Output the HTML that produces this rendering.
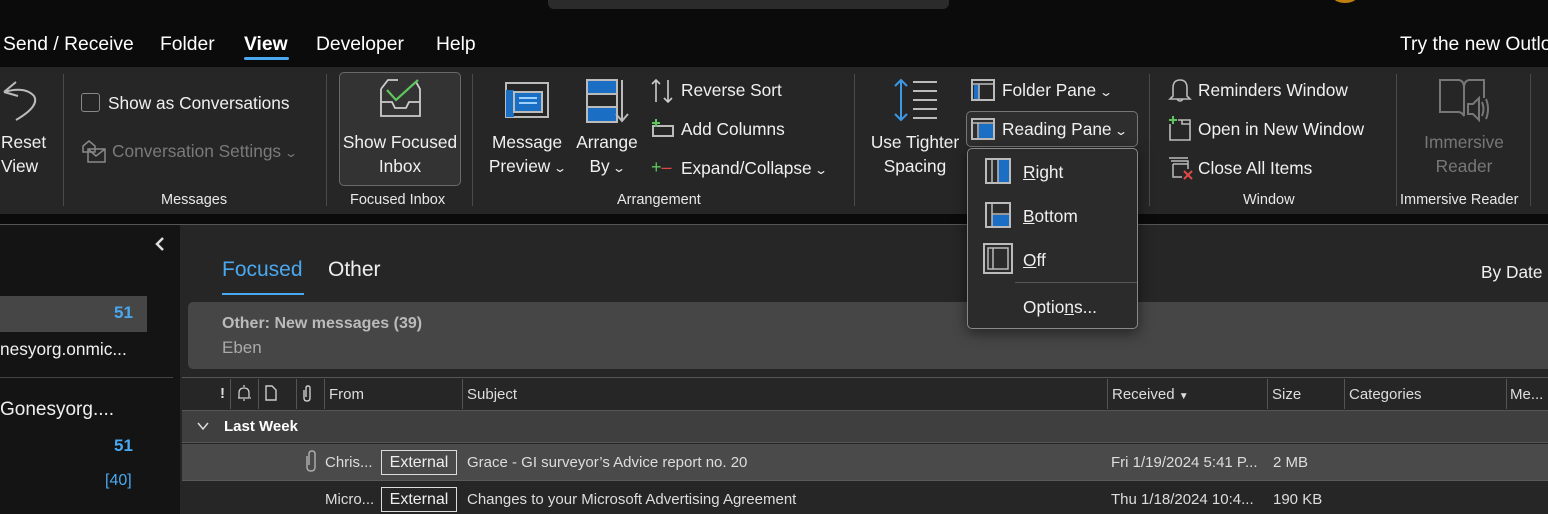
<!DOCTYPE html>
<html><head><meta charset="utf-8"><style>
*{margin:0;padding:0;box-sizing:border-box}
body{width:1548px;height:514px;overflow:hidden;background:#262626;font-family:"Liberation Sans",sans-serif;color:#fff;position:relative}
.a{position:absolute;white-space:nowrap}
.t{font-size:19.3px;color:#fff}
.r{font-size:17.3px;color:#f0f0f0}
.g{font-size:14.5px;color:#e8e8e8}
.sep{position:absolute;width:1px;background:#4a4a4a}
.s{font-size:15px;color:#ddd}
.chev{font-size:12px;display:inline-block;transform:scaleX(1.4)}
</style></head><body>
<div class="a" style="left:0;top:0;width:1548px;height:67px;background:#0b0b0b"></div>
<div class="a" style="left:548px;top:0;width:401px;height:9px;background:#2b2b2b;border-radius:0 0 6px 6px"></div>
<div class="a" style="left:1333px;top:-10px;width:24px;height:13px;background:#c08010;border-radius:50%"></div>
<div class="a t" style="left:3px;top:34px">Send / Receive</div>
<div class="a t" style="left:160px;top:34px">Folder</div>
<div class="a t" style="left:244px;top:34px;font-weight:bold">View</div>
<div class="a" style="left:244px;top:57px;width:45px;height:3px;background:#4aa8f0;border-radius:2px"></div>
<div class="a t" style="left:316px;top:34px">Developer</div>
<div class="a t" style="left:436px;top:34px">Help</div>
<div class="a t" style="left:1400px;top:34px">Try the new Outlo</div>

<div class="a" style="left:0;top:67px;width:1548px;height:147px;background:#262626"></div>
<svg class="a" style="left:0;top:78px" width="42" height="44"><path d="M4 14 L16 4 M4 14 L18 18 M4 14 Q25 8 34 18 Q40 28 16 42" fill="none" stroke="#bbb" stroke-width="2"/></svg>
<div class="a r" style="left:1px;top:130px;line-height:24px">Reset<br>View</div>
<div class="sep" style="left:63px;top:74px;height:132px"></div>
<div class="a" style="left:81px;top:93px;width:19px;height:19px;border:1.5px solid #888;border-radius:3px"></div>
<div class="a r" style="left:108px;top:93px">Show as Conversations</div>
<svg class="a" style="left:81px;top:138px" width="26" height="26"><path d="M2 8 L8 3 L14 8 V14 H2Z M7 11 H24 V24 H7Z M7 11 L15 18 L24 11" fill="none" stroke="#888" stroke-width="1.5"/></svg>
<div class="a r" style="left:112px;top:141px;color:#7a7a7a">Conversation Settings <span class="chev">&#8964;</span></div>
<div class="a g" style="left:161px;top:192px">Messages</div>
<div class="sep" style="left:326px;top:74px;height:132px"></div>
<div class="a" style="left:339px;top:72px;width:122px;height:114px;border:1px solid #6a6a6a;border-radius:5px;background:#333"></div>
<svg class="a" style="left:378px;top:78px" width="46" height="40"><path d="M3 11 L10 2 H20 M3 11 V38 H42 V11 L38 4 M3 24 H14 L17 30 H28 L31 24 H42" fill="none" stroke="#ccc" stroke-width="1.8"/><path d="M9 12 L18 22 L40 2" fill="none" stroke="#5fc55f" stroke-width="2.2"/></svg>
<div class="a r" style="left:342px;top:130px;line-height:24px;text-align:center;width:116px">Show Focused<br>Inbox</div>
<div class="a g" style="left:350px;top:192px">Focused Inbox</div>
<div class="sep" style="left:472px;top:74px;height:132px"></div>
<svg class="a" style="left:505px;top:82px" width="44" height="36"><rect x="1" y="1" width="42" height="34" fill="none" stroke="#bbb" stroke-width="2"/><rect x="1" y="8" width="8" height="27" fill="#1a6fc4"/><rect x="9" y="10" width="28" height="20" fill="#1a6fc4" stroke="#bbb" stroke-width="2"/><path d="M14 16 H32 M14 21 H32" stroke="#9cd0ff" stroke-width="2"/></svg>
<div class="a r" style="left:486px;top:130px;line-height:24px;text-align:center;width:82px">Message<br>Preview <span class="chev">&#8964;</span></div>
<svg class="a" style="left:585px;top:78px" width="48" height="48"><rect x="2" y="2" width="30" height="42" fill="none" stroke="#bbb" stroke-width="2"/><rect x="3" y="3" width="28" height="12" fill="#1a6fc4"/><rect x="3" y="29" width="28" height="14" fill="#1a6fc4"/><path d="M2 16 H32 M2 29 H32 M37 2 V42 M31 36 L37 43 L43 36" fill="none" stroke="#bbb" stroke-width="2"/></svg>
<div class="a r" style="left:570px;top:130px;line-height:24px;text-align:center;width:74px">Arrange<br>By <span class="chev">&#8964;</span></div>
<svg class="a" style="left:650px;top:78px" width="26" height="26"><path d="M6 2 V24 M2 6 L6 2 L10 6 M18 2 V24 M14 20 L18 24 L22 20" fill="none" stroke="#ccc" stroke-width="1.6"/></svg>
<div class="a r" style="left:681px;top:80px">Reverse Sort</div>
<svg class="a" style="left:650px;top:118px" width="26" height="22"><rect x="3" y="8" width="20" height="10" fill="none" stroke="#bbb" stroke-width="2"/><path d="M6 1 V9 M2 5 H10" stroke="#5fc55f" stroke-width="2"/></svg>
<div class="a r" style="left:681px;top:119px">Add Columns</div>
<div class="a" style="left:651px;top:157px;font-size:18px"><span style="color:#5fc55f">+</span><span style="color:#e04848">&#8211;</span></div>
<div class="a r" style="left:681px;top:158px">Expand/Collapse <span class="chev">&#8964;</span></div>
<div class="a g" style="left:617px;top:192px">Arrangement</div>
<div class="sep" style="left:854px;top:74px;height:132px"></div>
<svg class="a" style="left:891px;top:78px" width="48" height="46"><path d="M10 2 V24 M4 8 L10 2 L16 8 M10 24 V42 M4 36 L10 42 L16 36" fill="none" stroke="#3a9ae8" stroke-width="2"/><path d="M22 4 H46 M22 13 H46 M22 22 H46 M22 31 H46 M22 40 H46" stroke="#bbb" stroke-width="2"/></svg>
<div class="a r" style="left:868px;top:130px;line-height:24px;text-align:center;width:94px">Use Tighter<br>Spacing</div>
<svg class="a" style="left:971px;top:79px" width="24" height="22"><rect x="1" y="1" width="22" height="20" fill="none" stroke="#bbb" stroke-width="2"/><rect x="3" y="6" width="5" height="14" fill="#1a6fc4"/><path d="M1 5 H23 M8 5 V21" stroke="#bbb" stroke-width="1.5"/></svg>
<div class="a r" style="left:1002px;top:80px">Folder Pane <span class="chev">&#8964;</span></div>
<div class="a" style="left:966px;top:111px;width:172px;height:36px;border:1px solid #777;border-radius:5px;background:#2e2e2e"></div>
<svg class="a" style="left:971px;top:118px" width="24" height="22"><rect x="1" y="1" width="22" height="20" fill="none" stroke="#bbb" stroke-width="2"/><rect x="8" y="6" width="14" height="14" fill="#1a6fc4"/><path d="M1 5 H23 M7 5 V21" stroke="#bbb" stroke-width="1.5"/></svg>
<div class="a r" style="left:1002px;top:119px">Reading Pane <span class="chev">&#8964;</span></div>
<div class="sep" style="left:1149px;top:74px;height:132px"></div>
<svg class="a" style="left:1168px;top:78px" width="24" height="24"><path d="M5 18 V10 Q5 2 12 2 Q19 2 19 10 V18 L22 21 H2 Z M9 21 Q12 25 15 21" fill="none" stroke="#bbb" stroke-width="1.6"/></svg>
<div class="a r" style="left:1198px;top:80px">Reminders Window</div>
<svg class="a" style="left:1168px;top:116px" width="24" height="26"><path d="M2 8 V24 H22 V4 H10 M14 4 V8 H22" fill="none" stroke="#bbb" stroke-width="1.6"/><path d="M5 0 V8 M1 4 H9" stroke="#5fc55f" stroke-width="2"/></svg>
<div class="a r" style="left:1198px;top:119px">Open in New Window</div>
<svg class="a" style="left:1168px;top:157px" width="26" height="24"><path d="M1 1 H20 M3 4 H20 V12 M5 7 V20 H14 M5 7 H20" fill="none" stroke="#bbb" stroke-width="1.5"/><path d="M16 14 L24 22 M24 14 L16 22" stroke="#e04848" stroke-width="2"/></svg>
<div class="a r" style="left:1198px;top:158px">Close All Items</div>
<div class="a g" style="left:1243px;top:192px">Window</div>
<div class="sep" style="left:1396px;top:74px;height:132px"></div>
<svg class="a" style="left:1438px;top:78px" width="52" height="46"><path d="M2 2 H20 Q26 2 26 10 V38 Q24 34 20 34 H2 Z M26 10 Q26 2 32 2 H46 V20" fill="none" stroke="#777" stroke-width="2"/><path d="M30 26 H35 L41 20 V42 L35 36 H30 Z M44 24 Q47 31 44 38 M48 21 Q52 31 48 41" fill="none" stroke="#777" stroke-width="2"/></svg>
<div class="a r" style="left:1414px;top:130px;line-height:24px;text-align:center;width:100px;color:#777">Immersive<br>Reader</div>
<div class="a g" style="left:1400px;top:192px">Immersive Reader</div>
<div class="sep" style="left:1530px;top:74px;height:132px"></div>

<div class="a" style="left:0;top:214px;width:1548px;height:10px;background:#0b0b0b"></div>
<div class="a" style="left:0;top:224px;width:1548px;height:1px;background:#555"></div>
<div class="a" style="left:0;top:225px;width:180px;height:289px;background:#141414"></div>
<svg class="a" style="left:154px;top:236px" width="12" height="16"><path d="M9 2 L3 8 L9 14" fill="none" stroke="#ddd" stroke-width="2.5"/></svg>
<div class="a" style="left:0;top:296px;width:147px;height:36px;background:#464646"></div>
<div class="a" style="left:114px;top:303px;font-size:17px;font-weight:bold;color:#4aa8f0">51</div>
<div class="a r" style="left:0;top:339px">nesyorg.onmic...</div>
<div class="a" style="left:0;top:377px;width:173px;height:1px;background:#444"></div>
<div class="a" style="left:0;top:399px;font-size:19px;color:#eee">Gonesyorg....</div>
<div class="a" style="left:114px;top:436px;font-size:17px;font-weight:bold;color:#4aa8f0">51</div>
<div class="a" style="left:105px;top:472px;font-size:16px;color:#4aa8f0">[40]</div>
<div class="a" style="left:222px;top:258px;font-size:21px;color:#4aa8f0">Focused</div>
<div class="a" style="left:222px;top:293px;width:82px;height:2px;background:#4aa8f0"></div>
<div class="a" style="left:328px;top:258px;font-size:21px;color:#eee">Other</div>
<div class="a r" style="left:1481px;top:262px">By Date</div>
<div class="a" style="left:188px;top:302px;width:1360px;height:67px;background:#464646;border-radius:5px 0 0 5px"></div>
<div class="a" style="left:222px;top:315px;font-size:16px;font-weight:bold;color:#bbb">Other: New messages (39)</div>
<div class="a" style="left:222px;top:338px;font-size:17px;color:#aaa">Eben</div>
<div class="a" style="left:182px;top:377px;width:1366px;height:1px;background:#555"></div>
<div class="sep" style="left:230px;top:379px;height:30px;background:#555"></div>
<div class="sep" style="left:258px;top:379px;height:30px;background:#555"></div>
<div class="sep" style="left:296px;top:379px;height:30px;background:#555"></div>
<div class="sep" style="left:324px;top:379px;height:30px;background:#555"></div>
<div class="sep" style="left:462px;top:379px;height:30px;background:#555"></div>
<div class="sep" style="left:1107px;top:379px;height:30px;background:#555"></div>
<div class="sep" style="left:1267px;top:379px;height:30px;background:#555"></div>
<div class="sep" style="left:1344px;top:379px;height:30px;background:#555"></div>
<div class="sep" style="left:1506px;top:379px;height:30px;background:#555"></div>
<div class="a s" style="left:220px;top:385px;font-weight:bold">!</div>
<svg class="a" style="left:235px;top:384px" width="18" height="18"><path d="M4 14 V9 Q4 4 9 4 Q14 4 14 9 V14 H3 M15 14 H16 M8 16 H10 M9 1 V3" fill="none" stroke="#ccc" stroke-width="1.3"/></svg>
<svg class="a" style="left:265px;top:385px" width="12" height="16"><path d="M1 1 H7 L11 5 V15 H1 Z" fill="none" stroke="#ccc" stroke-width="1.4"/></svg>
<svg class="a" style="left:301px;top:385px" width="12" height="18"><path d="M3 5 V13 Q3 16 6 16 Q9 16 9 13 V3 Q9 1 7 1 Q5 1 5 3 V12" fill="none" stroke="#ccc" stroke-width="1.4"/></svg>
<div class="a s" style="left:329px;top:386px">From</div>
<div class="a s" style="left:467px;top:386px">Subject</div>
<div class="a s" style="left:1112px;top:386px">Received <span style="font-size:10px">&#9660;</span></div>
<div class="a s" style="left:1272px;top:386px">Size</div>
<div class="a s" style="left:1349px;top:386px">Categories</div>
<div class="a s" style="left:1510px;top:386px">Me...</div>
<div class="a" style="left:182px;top:410px;width:1366px;height:33px;background:#3f3f3f;border-top:1px solid #555;border-bottom:1px solid #555"></div>
<svg class="a" style="left:196px;top:421px" width="14" height="10"><path d="M2 2 L7 8 L12 2" fill="none" stroke="#ddd" stroke-width="1.5"/></svg>
<div class="a" style="left:224px;top:418px;font-size:15px;font-weight:bold;color:#fff">Last Week</div>
<div class="a" style="left:182px;top:444px;width:1366px;height:37px;background:#4a4a4a;border-bottom:1px solid #5a5a5a"></div>
<svg class="a" style="left:304px;top:450px" width="14" height="24"><path d="M3 6 V17 Q3 21 7 21 Q11 21 11 17 V4 Q11 1 8 1 Q5 1 5 4 V15" fill="none" stroke="#aaa" stroke-width="1.5"/></svg>
<div class="a s" style="left:325px;top:454px">Chris...</div>
<div class="a" style="left:381px;top:450px;width:76px;height:25px;border:1px solid #ddd;font-size:16px;color:#eee;text-align:center;line-height:24px">External</div>
<div class="a s" style="left:467px;top:454px">Grace - GI surveyor’s Advice report no. 20</div>
<div class="a s" style="left:1111px;top:454px">Fri 1/19/2024 5:41 P...</div>
<div class="a s" style="left:1273px;top:454px">2 MB</div>
<div class="a s" style="left:325px;top:491px">Micro...</div>
<div class="a" style="left:381px;top:487px;width:76px;height:25px;border:1px solid #ddd;font-size:16px;color:#eee;text-align:center;line-height:24px">External</div>
<div class="a s" style="left:467px;top:491px">Changes to your Microsoft Advertising Agreement</div>
<div class="a s" style="left:1111px;top:491px">Thu 1/18/2024 10:4...</div>
<div class="a s" style="left:1273px;top:491px">190 KB</div>
<div class="a" style="left:967px;top:148px;width:171px;height:181px;background:#2b2b2b;border:1px solid #888;border-radius:5px;box-shadow:0 4px 14px rgba(0,0,0,.5)"></div>
<svg class="a" style="left:985px;top:158px" width="26" height="26"><rect x="1" y="1" width="24" height="24" fill="none" stroke="#bbb" stroke-width="2"/><rect x="13" y="2" width="11" height="22" fill="#1a6fc4"/><path d="M7 1 V25 M13 1 V25" stroke="#bbb" stroke-width="1.5"/></svg>
<div class="a r" style="left:1023px;top:162px"><u>R</u>ight</div>
<svg class="a" style="left:985px;top:202px" width="26" height="26"><rect x="1" y="1" width="24" height="24" fill="none" stroke="#bbb" stroke-width="2"/><rect x="7" y="13" width="17" height="11" fill="#1a6fc4"/><path d="M7 1 V25 M7 12 H25" stroke="#bbb" stroke-width="1.5"/></svg>
<div class="a r" style="left:1023px;top:206px"><u>B</u>ottom</div>
<svg class="a" style="left:983px;top:243px" width="30" height="31"><rect x="1" y="1" width="28" height="29" fill="none" stroke="#bbb" stroke-width="2"/><rect x="5" y="5" width="20" height="21" fill="none" stroke="#bbb" stroke-width="1.5"/><path d="M10 5 V26" stroke="#bbb" stroke-width="1.5"/></svg>
<div class="a r" style="left:1023px;top:250px"><u>O</u>ff</div>
<div class="a" style="left:1015px;top:282px;width:122px;height:1px;background:#555"></div>
<div class="a r" style="left:1023px;top:297px">Optio<u>n</u>s...</div>
</body></html>
